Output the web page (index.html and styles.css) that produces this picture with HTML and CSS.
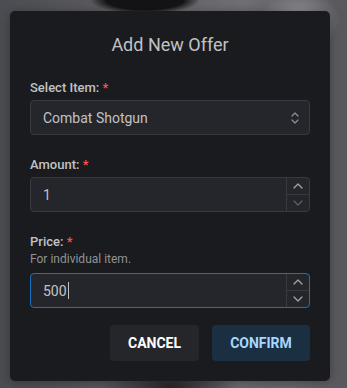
FILE: index.html
```html
<!DOCTYPE html>
<html lang="en">
<head>
  <meta charset="UTF-8">
  <title>Add New Offer</title>
  <meta name="viewport" content="width=device-width, initial-scale=1.0">
  <link rel="stylesheet" href="styles.css">
</head>
<body>

<div class="backdrop">
  <div class="modal">
    <h2 class="modal-title">Add New Offer</h2>

    <div class="field">
      <label class="field-label">Select Item: <span class="req">*</span></label>
      <div class="input select">
        <span class="input-value">Combat Shotgun</span>
        <!-- flecha del select -->
        <svg class="select-arrow" width="10" height="14" viewBox="0 0 10 14">
          <polyline points="2 5 5 2 8 5" fill="none" stroke="#909296" stroke-width="1.2" stroke-linecap="round" stroke-linejoin="round"/>
          <polyline points="2 9 5 12 8 9" fill="none" stroke="#909296" stroke-width="1.2" stroke-linecap="round" stroke-linejoin="round"/>
        </svg>
      </div>
    </div>

    <div class="field">
      <label class="field-label">Amount: <span class="req">*</span></label>
      <div class="input number">
        <span class="input-value">1</span>
        <div class="spinner">
          <span class="spin">
            <svg width="12" height="8" viewBox="0 0 12 8"><polyline points="2 6 6 2 10 6" fill="none" stroke="#a6a7ab" stroke-width="1.2" stroke-linecap="round" stroke-linejoin="round"/></svg>
          </span>
          <span class="spin">
            <svg width="12" height="8" viewBox="0 0 12 8"><polyline points="2 2 6 6 10 2" fill="none" stroke="#5c5f66" stroke-width="1.2" stroke-linecap="round" stroke-linejoin="round"/></svg>
          </span>
        </div>
      </div>
    </div>

    <div class="field">
      <label class="field-label">Price: <span class="req">*</span></label>
      <div class="field-desc">For individual item.</div>
      <div class="input number focused">
        <span class="input-value">500<span class="caret"></span></span>
        <div class="spinner">
          <span class="spin">
            <svg width="12" height="8" viewBox="0 0 12 8"><polyline points="2 6 6 2 10 6" fill="none" stroke="#a6a7ab" stroke-width="1.2" stroke-linecap="round" stroke-linejoin="round"/></svg>
          </span>
          <span class="spin">
            <svg width="12" height="8" viewBox="0 0 12 8"><polyline points="2 2 6 6 10 2" fill="none" stroke="#a6a7ab" stroke-width="1.2" stroke-linecap="round" stroke-linejoin="round"/></svg>
          </span>
        </div>
      </div>
    </div>

    <div class="actions">
      <button class="btn btn-cancel">Cancel</button>
      <button class="btn btn-confirm">Confirm</button>
    </div>
  </div>
</div>

</body>
</html>
```

FILE: styles.css
```css
body {
  margin: 0;
  padding: 0;
  font-family: Roboto, "Noto Sans", sans-serif;
  background: #45464a;
}

.backdrop {
  width: 347px;
  height: 388px;
  overflow: hidden;
  /* fondo borroso de la escena */
  background:
    radial-gradient(ellipse 55px 14px at 145px 0px, #141416 70%, transparent 100%),
    radial-gradient(ellipse 40px 30px at 300px 20px, #9a9a9e 0%, transparent 100%),
    radial-gradient(ellipse 60px 40px at 280px 388px, #6a6a6e 0%, transparent 100%),
    radial-gradient(ellipse 70px 30px at 170px 388px, #2a2426 0%, transparent 100%),
    linear-gradient(90deg, #4c4d52 0%, #5a5a5f 30%, #707074 70%, #58585c 100%);
  padding-top: 11px;
  box-sizing: border-box;
}

.modal {
  width: 320px;
  margin-left: 10px;
  box-sizing: border-box;
  padding: 22px 20px 20px;
  background: #1a1b1e;
  border-radius: 5px;
  box-shadow: 0 2px 12px rgba(0, 0, 0, 0.35);
}

.modal-title {
  margin: 0;
  text-align: center;
  font-size: 18px;
  line-height: 24px;
  font-weight: 400;
  color: #c1c2c5;
}

.field {
  margin-top: 22px;
}

.modal-title + .field {
  margin-top: 23px;
}

.field-label {
  display: block;
  font-size: 13px;
  line-height: 16px;
  font-weight: 500;
  color: #c1c2c5;
}

.req {
  color: #fa5252;
}

.field-desc {
  margin-top: 2px;
  font-size: 12px;
  line-height: 15px;
  color: #909296;
}

.input {
  display: flex;
  align-items: center;
  height: 35px;
  margin-top: 4px;
  box-sizing: border-box;
  background: #25262b;
  border: 1px solid #373a40;
  border-radius: 4px;
  color: #c1c2c5;
  font-size: 14px;
}

.field-desc + .input {
  margin-top: 6px;
}

.input.focused {
  border-color: #1971c2;
}

.input-value {
  flex: 1;
  padding-left: 12px;
  display: flex;
  align-items: center;
}

.caret {
  display: inline-block;
  width: 1px;
  height: 17px;
  margin-left: 1px;
  background: #c1c2c5;
}

.select-arrow {
  margin-right: 9px;
}

.spinner {
  align-self: stretch;
  width: 22px;
  display: flex;
  flex-direction: column;
  border-left: 1px solid #373a40;
}

.spin {
  flex: 1;
  display: flex;
  align-items: center;
  justify-content: center;
}

.spin + .spin {
  border-top: 1px solid #373a40;
}

.actions {
  display: flex;
  justify-content: flex-end;
  gap: 13px;
  margin-top: 17px;
}

.btn {
  all: unset;
  height: 36px;
  box-sizing: border-box;
  border-radius: 4px;
  font-size: 14px;
  font-weight: 700;
  text-transform: uppercase;
  text-align: center;
  line-height: 36px;
  cursor: pointer;
}

.btn-cancel {
  width: 89px;
  background: #25262b;
  color: #ffffff;
}

.btn-confirm {
  width: 98px;
  background: #1b2f42;
  color: #a5d8ff;
}
```
